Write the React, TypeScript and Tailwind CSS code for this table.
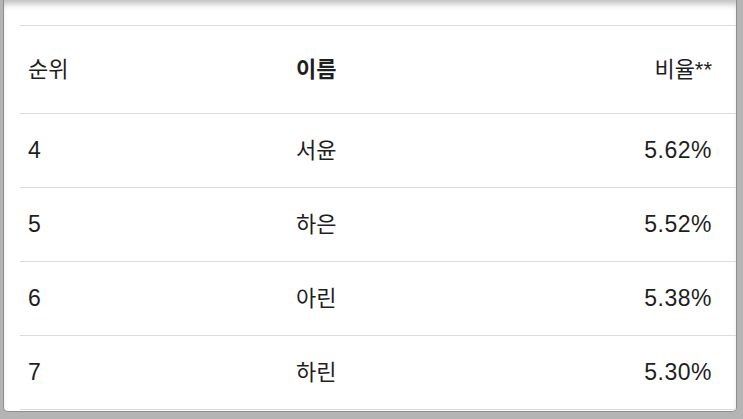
const ROWS = [
  { rank: '4', name: '서윤', pct: '5.62%' },
  { rank: '5', name: '하은', pct: '5.52%' },
  { rank: '6', name: '아린', pct: '5.38%' },
  { rank: '7', name: '하린', pct: '5.30%' },
]

const FONT = "font-['Liberation_Sans','Noto_Sans_CJK_KR',sans-serif]"

export default function App() {
  return (
    <div className={`w-[743px] h-[419px] bg-[#b4b4b4] pl-[3px] pr-[6px] pb-[7px] ${FONT}`}>
      <div className="h-full bg-white rounded-b-[5px] border border-t-0 border-[#8e8e8e] shadow-[inset_0_7px_6px_-3px_rgba(0,0,0,0.25)] pt-[25px] pl-[16px]">
        {/* table */}
        <div className="border-t border-[#dcdcdc] text-[#1e1e1e]">
          <div className="grid grid-cols-[268px_1fr_auto] items-center h-[88px] border-b border-[#dcdcdc] text-[22px]">
            <div className="pl-2">순위</div>
            <div className="pl-2 font-bold">이름</div>
            <div className="pr-[24px] text-right">비율**</div>
          </div>
          {ROWS.map((r) => (
            <div
              key={r.rank}
              className="grid grid-cols-[268px_1fr_auto] items-center h-[74px] border-b border-[#dcdcdc] text-[23px]"
            >
              <div className="pl-2">{r.rank}</div>
              <div className="pl-2 text-[22px]">{r.name}</div>
              <div className="pr-[24px] text-right tracking-[0.5px]">{r.pct}</div>
            </div>
          ))}
        </div>
      </div>
    </div>
  )
}
